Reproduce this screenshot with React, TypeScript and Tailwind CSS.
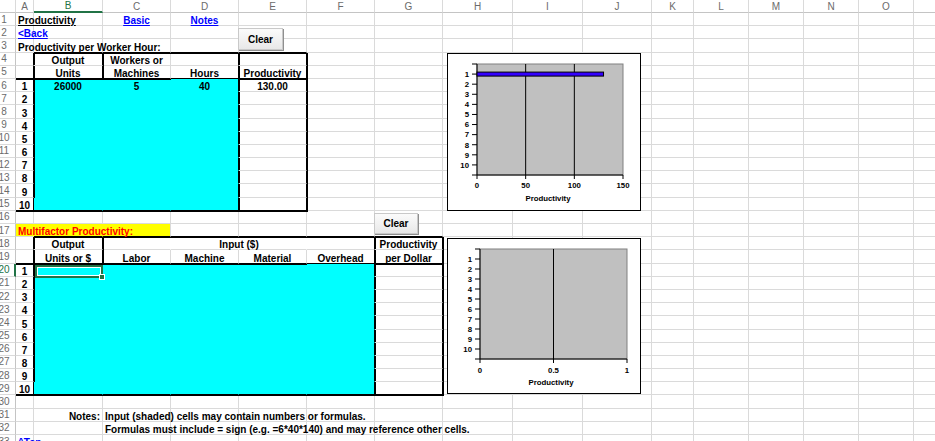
import React from "react";

type Spec = {
  t?: string;
  a?: "l" | "c" | "r";
  tone?: "link" | "red";
  u?: boolean;
  fill?: "cyan" | "yellow";
  r?: "thick" | "hide" | "grid";
  b?: "thick";
  wide?: boolean;
  sel?: boolean;
};

const LETTERS = ["A", "B", "C", "D", "E", "F", "G", "H", "I", "J", "K", "L", "M", "N", "O", "P"];
const ROWS = Array.from({ length: 33 }, (_, i) => i + 1);

const sheet: Record<string, Spec> = {};
const put = (key: string, s: Spec) => {
  sheet[key] = { ...sheet[key], ...s };
};
const area = (c1: string, c2: string, r1: number, r2: number, s: Spec) => {
  const i1 = LETTERS.indexOf(c1);
  const i2 = LETTERS.indexOf(c2);
  for (let r = r1; r <= r2; r++) for (let i = i1; i <= i2; i++) put(LETTERS[i] + r, s);
};

// Productivity per worker hour
area("B", "E", 3, 3, { b: "thick" });
area("A", "A", 4, 15, { r: "thick" });
area("A", "E", 5, 5, { b: "thick" });
area("B", "B", 4, 5, { r: "thick" });
area("D", "D", 4, 15, { r: "thick" });
area("E", "E", 4, 15, { r: "thick" });
area("A", "E", 15, 15, { b: "thick" });
area("B", "D", 6, 15, { fill: "cyan" });

// Multifactor
area("A", "C", 17, 17, { fill: "yellow" });
put("C17", { r: "grid" });
area("B", "G", 17, 17, { b: "thick" });
area("A", "A", 18, 29, { r: "thick" });
area("A", "G", 19, 19, { b: "thick" });
area("B", "B", 18, 19, { r: "thick" });
area("C", "E", 18, 18, { r: "hide" });
area("F", "F", 18, 29, { r: "thick" });
area("G", "G", 18, 29, { r: "thick" });
area("A", "G", 29, 29, { b: "thick" });
area("B", "F", 20, 29, { fill: "cyan" });
put("B20", { sel: true });

// text
put("A1", { t: "Productivity", u: true });
put("C1", { t: "Basic", a: "c", tone: "link" });
put("D1", { t: "Notes", a: "c", tone: "link" });
put("A2", { t: "<Back", tone: "link" });
put("A3", { t: "Productivity per Worker Hour:" });
put("B4", { t: "Output", a: "c" });
put("C4", { t: "Workers or", a: "c" });
put("B5", { t: "Units", a: "c" });
put("C5", { t: "Machines", a: "c" });
put("D5", { t: "Hours", a: "c" });
put("E5", { t: "Productivity", a: "c" });
for (let i = 1; i <= 10; i++) {
  put("A" + (i + 5), { t: String(i), a: "c" });
  put("A" + (i + 19), { t: String(i), a: "c" });
}
put("B6", { t: "26000", a: "c" });
put("C6", { t: "5", a: "c" });
put("D6", { t: "40", a: "c" });
put("E6", { t: "130.00", a: "c" });
put("A17", { t: "Multifactor Productivity:", tone: "red" });
put("B18", { t: "Output", a: "c" });
put("C18", { t: "Input ($)", wide: true });
put("G18", { t: "Productivity", a: "c" });
put("B19", { t: "Units or $", a: "c" });
put("C19", { t: "Labor", a: "c" });
put("D19", { t: "Machine", a: "c" });
put("E19", { t: "Material", a: "c" });
put("F19", { t: "Overhead", a: "c" });
put("G19", { t: "per Dollar", a: "c" });
put("B31", { t: "Notes:", a: "r" });
put("C31", { t: "Input (shaded) cells may contain numbers or formulas." });
put("C32", { t: "Formulas must include = sign (e.g. =6*40*140) and may reference other cells." });
put("A33", { t: "^Top", tone: "link" });

function Cell({ id }: { id: string }) {
  const s = sheet[id] ?? {};
  const rT = s.r === "thick";
  const bT = s.b === "thick";
  const right = rT
    ? "border-r border-r-black"
    : s.r === "hide"
      ? "border-r border-r-white"
      : s.r === "grid"
        ? "border-r border-r-[#dadada]"
        : s.fill === "cyan"
          ? "border-r border-r-[#00ffff]"
          : s.fill === "yellow"
            ? "border-r border-r-[#ffff00]"
            : "border-r border-r-[#dadada]";
  const bottom = bT
    ? "border-b border-b-black"
    : s.fill === "cyan"
      ? "border-b border-b-[#00ffff]"
      : "border-b border-b-[#dadada]";
  // thick rules straddle the grid line: 1px border + 1px shadow into the next cell
  const rule =
    rT && bT
      ? "z-[2] shadow-[1px_0_0_#000,0_1px_0_#000,1px_1px_0_#000]"
      : rT
        ? "z-[2] shadow-[1px_0_0_#000]"
        : bT
          ? "z-[2] shadow-[0_1px_0_#000]"
          : "";
  const bg = s.fill === "cyan" ? "bg-[#00ffff]" : s.fill === "yellow" ? "bg-[#ffff00]" : "";
  const justify = s.a === "c" ? "justify-center" : s.a === "r" ? "justify-end" : "justify-start";
  const tone =
    s.tone === "link"
      ? "text-[#0000ff] underline underline-offset-[1px]"
      : s.tone === "red"
        ? "text-[#ff0000]"
        : s.u
          ? "text-black underline underline-offset-[1px]"
          : "text-black";

  return (
    <div className={`relative flex items-end px-[2px] leading-[9px] ${justify} ${right} ${bottom} ${rule} ${bg}`}>
      {s.t && (
        <span
          className={`relative z-[3] whitespace-nowrap font-bold ${tone} ${s.wide ? "w-[268px] shrink-0 text-center" : ""}`}
        >
          {s.t}
        </span>
      )}
      {s.sel && (
        <div className="absolute left-[1px] top-[1px] z-10 h-[13px] w-[68px] border-2 border-[#217346] shadow-[inset_0_0_0_1px_white]">
          <div className="absolute left-[62px] top-[7px] h-[6px] w-[6px] border border-white bg-[#217346]" />
        </div>
      )}
    </div>
  );
}

const chartFont = { fontFamily: "'Liberation Sans', Arial, sans-serif", fontWeight: 700, fontSize: 7.8 };

function Chart1() {
  const x0 = 30;
  const w = 146;
  const y0 = 11;
  const h = 111;
  const step = h / 11;
  const xs = [0, 50, 100, 150].map((v) => x0 + (v / 150) * w);
  return (
    <div className="absolute left-[447px] top-[53px] h-[158px] w-[194px] border border-black bg-white">
      <svg width="192" height="156" className="block" style={chartFont}>
        <g transform="translate(-1,-1)">
          <rect x={x0} y={y0} width={w} height={h} fill="#c0c0c0" stroke="#808080" strokeWidth="1" />
          {xs.slice(1, 3).map((x) => (
            <line key={x} x1={x} y1={y0} x2={x} y2={y0 + h} stroke="#000" strokeWidth="1" />
          ))}
          <line x1={x0} y1={y0} x2={x0} y2={y0 + h} stroke="#000" />
          <line x1={x0} y1={y0 + h} x2={x0 + w} y2={y0 + h} stroke="#000" />
          {Array.from({ length: 12 }, (_, k) => (
            <line key={k} x1={x0 - 5} y1={y0 + k * step} x2={x0} y2={y0 + k * step} stroke="#000" />
          ))}
          {Array.from({ length: 10 }, (_, k) => (
            <text key={k} x={x0 - 8} y={y0 + (k + 1) * step + 2.8} textAnchor="end">
              {k + 1}
            </text>
          ))}
          {xs.map((x) => (
            <line key={x} x1={x} y1={y0 + h} x2={x} y2={y0 + h + 4} stroke="#000" />
          ))}
          {["0", "50", "100", "150"].map((l, i) => (
            <text key={l} x={xs[i]} y={y0 + h + 13} textAnchor="middle">
              {l}
            </text>
          ))}
          <rect x={x0} y={y0 + step - 2} width={(130 / 150) * w} height={4} fill="#3300ff" stroke="#000" strokeWidth="1" />
          <text x={101} y={148} textAnchor="middle">
            Productivity
          </text>
        </g>
      </svg>
    </div>
  );
}

function Chart2() {
  const x0 = 33;
  const w = 147;
  const y0 = 11;
  const h = 110;
  const step = h / 11;
  const xs = [0, 0.5, 1].map((v) => x0 + v * w);
  return (
    <div className="absolute left-[447px] top-[238px] h-[156px] w-[194px] border border-black bg-white">
      <svg width="192" height="154" className="block" style={chartFont}>
        <g transform="translate(-1,-1)">
          <rect x={x0} y={y0} width={w} height={h} fill="#c0c0c0" stroke="#808080" strokeWidth="1" />
          <line x1={xs[1]} y1={y0} x2={xs[1]} y2={y0 + h} stroke="#000" />
          <line x1={x0} y1={y0} x2={x0} y2={y0 + h} stroke="#000" />
          <line x1={x0} y1={y0 + h} x2={x0 + w} y2={y0 + h} stroke="#000" />
          {Array.from({ length: 12 }, (_, k) => (
            <line key={k} x1={x0 - 5} y1={y0 + k * step} x2={x0} y2={y0 + k * step} stroke="#000" />
          ))}
          {Array.from({ length: 10 }, (_, k) => (
            <text key={k} x={x0 - 8} y={y0 + (k + 1) * step + 2.8} textAnchor="end">
              {k + 1}
            </text>
          ))}
          {xs.map((x) => (
            <line key={x} x1={x} y1={y0 + h} x2={x} y2={y0 + h + 4} stroke="#000" />
          ))}
          {["0", "0.5", "1"].map((l, i) => (
            <text key={l} x={xs[i]} y={y0 + h + 13.5} textAnchor="middle">
              {l}
            </text>
          ))}
          <text x={104} y={147} textAnchor="middle">
            Productivity
          </text>
        </g>
      </svg>
    </div>
  );
}

const ClearButton = ({ className }: { className: string }) => (
  <button
    className={`absolute z-20 flex items-center justify-center border border-[#c9c9c9] bg-linear-to-b from-[#fbfbfb] to-[#e8e8e8] text-[10px] font-bold text-black shadow-[1px_1px_0_#8f8f8f] ${className}`}
  >
    Clear
  </button>
);

export default function App() {
  return (
    <div className="relative h-[441px] w-[935px] overflow-hidden bg-white font-['Liberation_Sans',Arial,sans-serif] text-[10px]">
      <div className="grid grid-cols-[16px_18px_69px_68px_68px_68px_68px_68px_70px_70px_69px_42px_55px_55px_55px_55px_60px] grid-rows-[13px_repeat(33,13.2px)]">
        <div className="border-r border-b border-r-[#dadada] border-b-[#c4c4c4]" />
        {LETTERS.map((l) => (
          <div
            key={l}
            className={
              l === "B"
                ? "flex items-center justify-center border-r border-b-2 border-r-[#dadada] border-b-[#217346] text-[10px] text-[#217346]"
                : "flex items-center justify-center border-r border-b border-r-[#dadada] border-b-[#c4c4c4] text-[10px] text-[#6b6b6b]"
            }
          >
            {l}
          </div>
        ))}
        {ROWS.map((r) => (
          <React.Fragment key={r}>
            <div
              className={
                r === 20
                  ? "flex items-center border-r-2 border-b border-r-[#217346] border-b-[#dadada] text-[10px] text-[#217346]"
                  : "flex items-center border-r border-b border-r-[#c4c4c4] border-b-[#dadada] text-[10px] text-[#6b6b6b]"
              }
            >
              <span className="-ml-[8px] w-[24px] shrink-0 text-center">{r}</span>
            </div>
            {LETTERS.map((l) => (
              <Cell key={l} id={l + r} />
            ))}
          </React.Fragment>
        ))}
      </div>

      <ClearButton className="left-[238px] top-[28px] h-[22px] w-[45px]" />
      <ClearButton className="left-[374px] top-[213px] h-[21px] w-[44px]" />
      <Chart1 />
      <Chart2 />
    </div>
  );
}
